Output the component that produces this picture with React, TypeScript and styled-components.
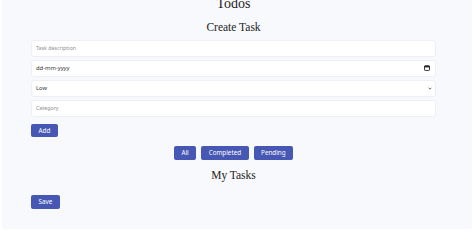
import React from "react";
import styled, {createGlobalStyle} from "styled-components";

const GlobalStyle = createGlobalStyle`
  html, body {
    margin: 0;
    padding: 0;
    background: #ffffff;
  }
  body {
    font-family: "Noto Sans", "Open Sans", sans-serif;
    overflow: hidden;
  }
`

const Page = styled.div`
  margin: 0 2px;
  padding: 0 36px 20px 29px;
  background: #f8f9fc;
  border-radius: 0 0 3px 3px;
`

const Title = styled.h1`
  margin: -4.5px 0 0;
  font-family: "Liberation Serif", serif;
  font-weight: 400;
  font-size: 14px;
  text-align: center;
  color: #222;
`

const SubTitle = styled.h2<{ top: number, bottom: number }>`
  margin: ${p => p.top}px 0 ${p => p.bottom}px;
  font-family: "Liberation Serif", serif;
  font-weight: 400;
  font-size: 11.5px;
  text-align: center;
  color: #222;
`

const Form = styled.div`
  display: flex;
  flex-direction: column;
  gap: 3px;
`

const Field = styled.div<{ dim?: boolean }>`
  box-sizing: border-box;
  height: 17px;
  display: flex;
  align-items: center;
  justify-content: space-between;
  padding: 0 5px 0 4px;
  background: #ffffff;
  border: 1px solid #eef0f5;
  border-radius: 3px;
  font-size: ${p => p.dim ? 5.3 : 5.8}px;
  color: ${p => p.dim ? '#8e8e8e' : '#333'};
`

const Button = styled.button`
  height: 13.5px;
  padding: 0 7.5px;
  border: none;
  border-radius: 2px;
  background: #4657b4;
  color: #fff;
  font-family: "Noto Sans", sans-serif;
  font-size: 6.3px;
  line-height: 13.5px;
`

const Row = styled.div<{ center?: boolean, top: number }>`
  display: flex;
  gap: 5px;
  justify-content: ${p => p.center ? 'center' : 'flex-start'};
  margin-top: ${p => p.top}px;
`

const ChevronBox = styled.span`
  display: flex;
  margin-right: -2px;
`

const CalendarIcon = () => <svg width="6" height="6" viewBox="0 0 6 6">
    <rect x="0.5" y="0.8" width="5" height="4.6" rx="0.6" fill="none" stroke="#222" strokeWidth="0.9"/>
    <rect x="0.5" y="0.8" width="5" height="1.6" fill="#222"/>
</svg>

const Chevron = () => <ChevronBox>
    <svg width="4" height="3" viewBox="0 0 4 3">
        <path d="M0.6 0.8 L2 2.2 L3.4 0.8" fill="none" stroke="#444" strokeWidth="0.8"/>
    </svg>
</ChevronBox>

export default function App() {
    return <>
        <GlobalStyle/>
        <Page>
            <Title>Todos</Title>
            <SubTitle top={9.5} bottom={6.5}>Create Task</SubTitle>
            <Form>
                <Field dim>Task description</Field>
                <Field>dd-mm-yyyy<CalendarIcon/></Field>
                <Field>Low<Chevron/></Field>
                <Field dim>Category</Field>
            </Form>
            <Row top={7}>
                <Button>Add</Button>
            </Row>
            <Row center top={9}>
                <Button>All</Button>
                <Button>Completed</Button>
                <Button>Pending</Button>
            </Row>
            <SubTitle top={9.8} bottom={14}>My Tasks</SubTitle>
            <Row top={0}>
                <Button>Save</Button>
            </Row>
        </Page>
    </>
}
